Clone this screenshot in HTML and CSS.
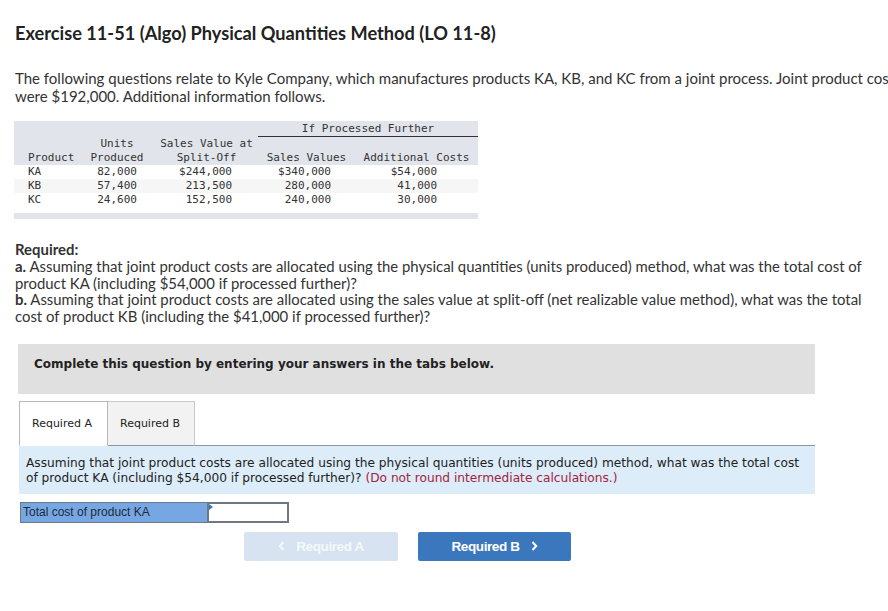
FILE: index.html
```html
<!DOCTYPE html>
<html>
<head>
<meta charset="utf-8">
<link rel="stylesheet" href="styles.css">
</head>
<body>
<div class="page">
  <h1 class="title">Exercise 11-51 (Algo) Physical Quantities Method (LO 11-8)</h1>
  <p class="intro">The following questions relate to Kyle Company, which manufactures products KA, KB, and KC from a joint process. Joint product costs<br>were $192,000. Additional information follows.</p>

  <table class="data">
    <colgroup>
      <col class="c1"><col class="c2"><col class="c3"><col class="c4"><col class="c5">
    </colgroup>
    <thead>
      <tr class="hd"><td></td><td></td><td></td><td colspan="2" class="group">If Processed Further</td></tr>
      <tr class="hd"><td></td><td class="ctr">Units</td><td class="ctr s3">Sales Value at</td><td></td><td></td></tr>
      <tr class="hd"><td class="left">Product</td><td class="ctr">Produced</td><td class="ctr s3">Split-Off</td><td class="ctr">Sales Values</td><td class="ctr">Additional Costs</td></tr>
    </thead>
    <tbody>
      <tr><td class="left">KA</td><td class="n2">82,000</td><td class="n3">$244,000</td><td class="n4">$340,000</td><td class="n5">$54,000</td></tr>
      <tr class="alt"><td class="left">KB</td><td class="n2">57,400</td><td class="n3">213,500</td><td class="n4">280,000</td><td class="n5">41,000</td></tr>
      <tr><td class="left">KC</td><td class="n2">24,600</td><td class="n3">152,500</td><td class="n4">240,000</td><td class="n5">30,000</td></tr>
      <tr class="gap"><td colspan="5"></td></tr>
      <tr class="foot"><td colspan="5"></td></tr>
    </tbody>
  </table>

  <div class="required">
    <div class="req-title">Required:</div>
    <div><b>a.</b> Assuming that joint product costs are allocated using the physical quantities (units produced) method, what was the total cost of<br>product KA (including $54,000 if processed further)?</div>
    <div><b>b.</b> Assuming that joint product costs are allocated using the sales value at split-off (net realizable value method), what was the total<br>cost of product KB (including the $41,000 if processed further)?</div>
  </div>

  <div class="notice">Complete this question by entering your answers in the tabs below.</div>

  <div class="tabs">
    <div class="tab active">Required A</div>
    <div class="tab">Required B</div>
    <div class="tab-fill"></div>
  </div>

  <div class="panel">Assuming that joint product costs are allocated using the physical quantities (units produced) method, what was the total cost<br>of product KA (including $54,000 if processed further)? <span class="hint">(Do not round intermediate calculations.)</span></div>

  <div class="answer">
    <div class="answer-label">Total cost of product KA</div>
    <div class="answer-input"><span class="marker"></span></div>
  </div>

  <div class="nav">
    <div class="btn btn-prev"><svg class="chev" width="7" height="10" viewBox="0 0 7 10"><path d="M5.5 1 L1.8 5 L5.5 9" fill="none" stroke="currentColor" stroke-width="2"/></svg><span>Required A</span></div>
    <div class="btn btn-next"><span>Required B</span><svg class="chev" width="7" height="10" viewBox="0 0 7 10"><path d="M1.5 1 L5.2 5 L1.5 9" fill="none" stroke="currentColor" stroke-width="2"/></svg></div>
  </div>
</div>
</body>
</html>
```

FILE: styles.css
```css
html, body {
  margin: 0;
  padding: 0;
  background: #ffffff;
  overflow: hidden;
}

.page {
  width: 888px;
  height: 611px;
  overflow: hidden;
  padding: 0 0 0 15px;
  box-sizing: border-box;
  color: #333;
  font-family: Lato, "Open Sans", sans-serif;
}

.title {
  margin: 22px 0 0 0;
  font-size: 18.2px;
  line-height: 22px;
  font-weight: 700;
  color: #222;
}

.intro {
  margin: 25px 0 0 0;
  font-size: 15px;
  line-height: 18px;
  white-space: nowrap;
  color: #333;
}

.data {
  margin: 16px 0 0 -1px;
  border-collapse: collapse;
  font-family: "DejaVu Sans Mono", "Liberation Mono", monospace;
  font-size: 11px;
  color: #333;
  table-layout: fixed;
  width: 464px;
}

.data td {
  padding: 0;
  height: 14px;
  line-height: 14px;
  white-space: nowrap;
}

.c1 { width: 70px; }
.c2 { width: 66px; }
.c3 { width: 108px; }
.c4 { width: 97px; }
.c5 { width: 123px; }

.hd td { background: #e1e4ea; }
.data thead tr:first-child td { padding-top: 1px; }
.group {
  text-align: center;
  border-bottom: 1px solid #333;
}
.ctr { text-align: center; }
.s3 { padding-left: 5px !important; }
.left { padding-left: 14px !important; }
.n2 { text-align: right; padding-right: 13px !important; }
.n3 { text-align: right; padding-right: 26px !important; }
.n4 { text-align: right; padding-right: 24px !important; }
.n5 { text-align: right; padding-right: 41px !important; }
.alt td { background: #f6f6f6; }
.data tr.gap td { height: 6px; line-height: 6px; }
.data tr.foot td { height: 6px; line-height: 6px; background: #e1e4ea; }

.required {
  margin-top: 22px;
  font-size: 14.9px;
  line-height: 16.8px;
  color: #333;
}
.req-title { font-weight: 700; }
.required b { font-weight: 700; }

.notice {
  margin: 19px 0 0 3px;
  width: 797px;
  height: 50px;
  box-sizing: border-box;
  background: #e0e0e0;
  padding: 11px 0 0 16px;
  font-family: "DejaVu Sans", Verdana, sans-serif;
  font-weight: 700;
  font-size: 12px;
  line-height: 18px;
  color: #222;
}

.tabs {
  margin: 7px 0 0 4px;
  width: 796px;
  display: flex;
  height: 45px;
  font-family: "DejaVu Sans", Verdana, sans-serif;
  font-size: 11px;
  color: #222;
}
.tab {
  box-sizing: border-box;
  border: 1px solid #c8c8c8;
  border-bottom: 1px solid #8a99a8;
  background: #f2f2f2;
  padding: 14px 12px 0 12px;
  line-height: 16px;
}
.tab.active {
  background: #ffffff;
  border-color: #b8b8b8;
  border-bottom: 1px solid #ffffff;
  width: 89px;
}
.tab + .tab { border-left: none; width: 87px; }
.tab-fill {
  flex: 1;
  border-bottom: 1px solid #8a99a8;
}

.panel {
  margin-left: 4px;
  width: 796px;
  height: 48px;
  box-sizing: border-box;
  background: #dcecf8;
  padding: 10px 0 0 7px;
  font-family: "DejaVu Sans", Verdana, sans-serif;
  font-size: 12.2px;
  line-height: 15px;
  color: #222;
}
.hint { color: #a3243b; }

.answer {
  margin: 8px 0 0 5px;
  display: flex;
  height: 21px;
}
.answer-label {
  box-sizing: border-box;
  width: 187px;
  background: #77a7e2;
  border: 1px solid #6e7782;
  border-right: none;
  font-family: "Liberation Sans", Arial, sans-serif;
  font-size: 12px;
  line-height: 19px;
  padding-left: 2px;
  color: #1d2a3a;
}
.answer-input {
  position: relative;
  box-sizing: border-box;
  width: 82px;
  border: 2px solid #6e7782;
  background: #fff;
}
.marker {
  position: absolute;
  left: 0;
  top: 0;
  width: 0;
  height: 0;
  border-top: 3px solid transparent;
  border-bottom: 3px solid transparent;
  border-left: 4px solid #3b77bd;
}

.nav {
  margin: 9px 0 0 229px;
  display: flex;
  gap: 20px;
}
.btn {
  width: 154px;
  height: 29px;
  box-sizing: border-box;
  border-radius: 2px;
  display: flex;
  align-items: center;
  justify-content: center;
  gap: 11px;
  font-family: "Liberation Sans", Arial, sans-serif;
  font-weight: 700;
  font-size: 13.5px;
  color: #fff;
  letter-spacing: -0.4px;
}
.btn-prev { background: #d7e3f0; color: #f4f8fc; }
.btn-next { background: #3b77bd; width: 153px; }
.chev { display: block; }
```
